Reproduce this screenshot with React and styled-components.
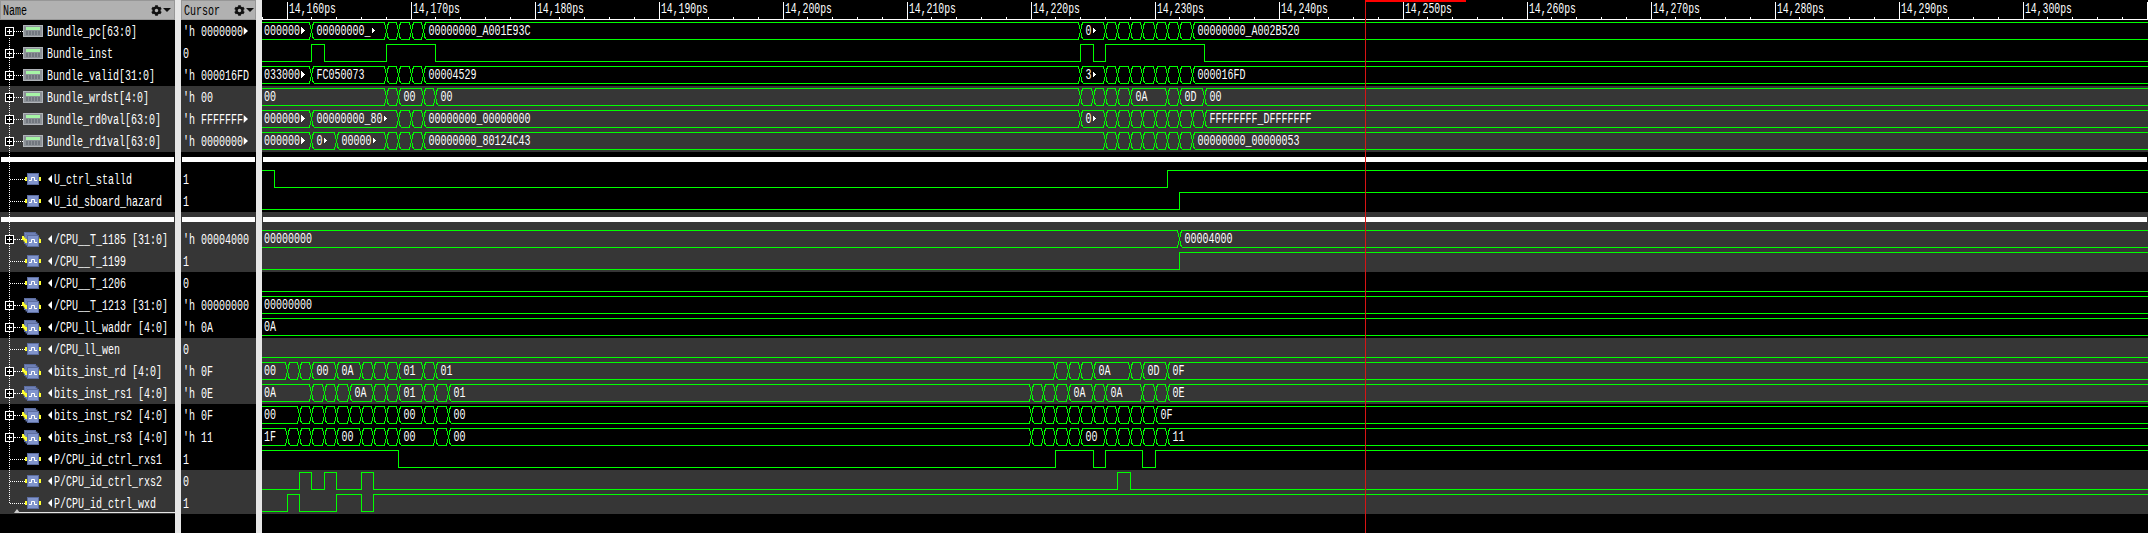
import React from "react";
import styled, { createGlobalStyle } from "styled-components";
import { FaCog } from "react-icons/fa";

const MONO = `"Liberation Mono", "DejaVu Sans Mono", monospace`;
const WAVE_W = 1886;
const HI = 2.5;
const LO = 19.5;

// pixel of a time given in ps after 14,160, inside the wave pane
const px = (n) => Math.floor(287 + 12.4 * n) - 262 + 0.5;

const GlobalStyle = createGlobalStyle`
  html, body {
    margin: 0;
    height: 533px;
    overflow: hidden;
    background: #000;
  }
`;

const Frame = styled.div`
  display: grid;
  grid-template-columns: 175px 75px 1fr;
  column-gap: 6px;
  height: 533px;
  background: #e6e6e6;
  font-family: ${MONO};
  font-size: 14px;
  color: #fff;
`;

const Pane = styled.div`
  position: relative;
  display: flex;
  flex-direction: column;
  min-width: 0;
  background: #000;
  overflow: hidden;
`;

const Header = styled.div`
  box-sizing: border-box;
  height: 20px;
  flex: none;
  display: flex;
  align-items: center;
  justify-content: space-between;
  padding: 0 3px 0 2px;
  background: #b1b1b1;
  border: 1px solid #979797;
  color: #000;
`;

const Tools = styled.div`
  display: flex;
  align-items: center;
  gap: 1px;
  svg {
    width: 11px;
    height: 11px;
    display: block;
  }
`;

const Caret = styled.span`
  width: 0;
  height: 0;
  border-left: 4px solid transparent;
  border-right: 4px solid transparent;
  border-top: 4px solid #111;
`;

const Row = styled.div`
  height: 22px;
  flex: none;
  display: flex;
  align-items: center;
  overflow: hidden;
  white-space: nowrap;
  background: ${(p) => (p.$grey ? "#363636" : "#000")};
  padding-left: ${(p) => p.$pad || 0}px;
`;

const Separator = styled.div`
  box-sizing: border-box;
  height: 16px;
  flex: none;
  padding: 5px 0 6px;
  background: ${(p) => (p.$grey ? "#363636" : "#000")};
  padding-left: ${(p) => p.$left}px;
  padding-right: 1px;
  &::after {
    content: "";
    display: block;
    height: 5px;
    background: #fff;
  }
`;

const Mono = styled.span`
  display: inline-block;
  transform: translateY(1px) scaleX(0.714);
  transform-origin: 0 50%;
  white-space: nowrap;
  line-height: 14px;
`;

const Trunc = styled.span`
  display: inline-block;
  width: 0;
  height: 0;
  margin-left: 1px;
  vertical-align: 1px;
  border-top: 4px solid transparent;
  border-bottom: 4px solid transparent;
  border-left: 6px solid #fff;
`;

const Pointer = styled.span`
  flex: none;
  width: 0;
  height: 0;
  margin: 0 2px 0 7px;
  border-top: 4px solid transparent;
  border-bottom: 4px solid transparent;
  border-right: 4px solid #fff;
`;

const Expander = styled.span`
  position: relative;
  z-index: 2;
  box-sizing: border-box;
  flex: none;
  width: 9px;
  height: 9px;
  border: 1px solid #fff;
  background: #000;
  &::before,
  &::after {
    content: "";
    position: absolute;
    background: #fff;
  }
  &::before {
    left: 1px;
    right: 1px;
    top: 3px;
    height: 1px;
  }
  &::after {
    top: 1px;
    bottom: 1px;
    left: 3px;
    width: 1px;
  }
`;

const Stem = styled.span`
  flex: none;
  width: ${(p) => p.$w}px;
  margin-left: ${(p) => p.$left || 0}px;
  border-top: 1px dotted #fff;
`;

const TreeLine = styled.div`
  position: absolute;
  left: 9px;
  top: 38px;
  height: 465px;
  border-left: 1px dotted #fff;
`;

const Sash = styled.div`
  position: absolute;
  left: 17px;
  right: 0;
  top: 512px;
  height: 1px;
  background: #e6e6e6;
  &::before {
    content: "";
    position: absolute;
    left: -3px;
    top: -3px;
    border-left: 3px solid transparent;
    border-right: 3px solid transparent;
    border-bottom: 4px solid #ccc;
  }
`;

const IconSvg = styled.svg`
  flex: none;
  display: block;
`;

const RulerSvg = styled.svg`
  flex: none;
  display: block;
  shape-rendering: crispEdges;
`;

const WaveSvg = styled.svg`
  display: block;
  flex: none;
  shape-rendering: crispEdges;
`;

const WaveLine = styled.path`
  fill: none;
  stroke: #00ff00;
  stroke-width: 1;
`;

const TickLine = styled.path`
  fill: none;
  stroke: #fff;
  stroke-width: 1;
`;

const SvgText = styled.text`
  fill: #fff;
  font-family: ${MONO};
  font-size: 14px;
`;

const SvgArrow = styled.polygon`
  fill: #fff;
`;

const CursorLine = styled.div`
  position: absolute;
  left: 1103px;
  top: 0;
  bottom: 0;
  width: 1px;
  background: #d81414;
`;

const CursorFlag = styled.div`
  position: absolute;
  left: 1103px;
  top: 0;
  width: 101px;
  height: 2px;
  background: #f00;
`;

const BundleIcon = () => (
  <IconSvg width="20" height="12" viewBox="0 0 20 12">
    <rect x="0.5" y="0.5" width="19" height="11" fill="#8d9298" stroke="#b0b4b9" />
    <rect x="3" y="2" width="14" height="3" fill="#a6f5a6" />
    <path d="M3 7h14M3 9h14" stroke="#565c66" strokeDasharray="2 1" />
  </IconSvg>
);

const Chip = ({ x = 0, y = 0 }) => (
  <g transform={`translate(${x} ${y})`}>
    <rect x="0" y="4" width="16" height="4" fill="#ffff30" />
    <rect x="2.5" y="0.5" width="11" height="11" fill="#8094cc" stroke="#5c6da0" />
    <path d="M4 7.5h2.5v-3h3v3H12" fill="none" stroke="#fff" />
  </g>
);

const WireIcon = () => (
  <IconSvg width="16" height="12" viewBox="0 0 16 12">
    <Chip />
  </IconSvg>
);

const MultiIcon = () => (
  <IconSvg width="19" height="15" viewBox="0 0 19 15">
    <Chip x={0} y={0} />
    <Chip x={1.5} y={1.5} />
    <Chip x={3} y={3} />
  </IconSvg>
);

// flat list: numbers are the edges, a string names the segment in front of it
const bus = (...items) => {
  const edges = [];
  const labels = [];
  items.forEach((it) => {
    if (typeof it === "number") edges.push(it);
    else labels.push({ x: edges.length ? px(edges[edges.length - 1]) + 5 : 2, text: it });
  });
  return { edges, labels };
};

const bit = (start, ...edges) => ({ start, edges });

const wavePath = (edges) => {
  let d = "";
  let from = -1;
  edges.forEach((n) => {
    const x = px(n);
    d += `M${from} ${HI}H${x - 2}M${from} ${LO}H${x - 2}`;
    d += `M${x - 2} ${HI}L${x + 2} ${LO}M${x - 2} ${LO}L${x + 2} ${HI}`;
    from = x + 2;
  });
  return d + `M${from} ${HI}H${WAVE_W}M${from} ${LO}H${WAVE_W}`;
};

const bitPath = ({ start, edges }) => {
  let level = start;
  let d = `M-1 ${level ? HI : LO}`;
  edges.forEach((n) => {
    level = !level;
    d += `H${px(n)}V${level ? HI : LO}`;
  });
  return d + `H${WAVE_W}`;
};

const Wave = ({ wave }) => (
  <WaveSvg width={WAVE_W} height="22" viewBox={`0 0 ${WAVE_W} 22`}>
    <WaveLine d={wave.labels ? wavePath(wave.edges) : bitPath(wave)} />
    {wave.labels &&
      wave.labels.map((l) => {
        const cut = l.text.endsWith(">");
        const text = cut ? l.text.slice(0, -1) : l.text;
        const w = text.length * 6;
        return (
          <React.Fragment key={l.x}>
            <SvgText x={l.x} y="15" textLength={w} lengthAdjust="spacingAndGlyphs">
              {text}
            </SvgText>
            {cut && <SvgArrow points={`${l.x + w + 1},7 ${l.x + w + 5},10.5 ${l.x + w + 1},14`} />}
          </React.Fragment>
        );
      })}
  </WaveSvg>
);

const Ruler = () => {
  const majors = [];
  for (let t = 0; t <= 15; t++) majors.push(t);
  let minor = "";
  for (let n = -2; n < 150; n += 2) {
    if (n % 10 !== 0) minor += `M${px(n)} 17V19`;
  }
  return (
    <RulerSvg width={WAVE_W} height="20" viewBox={`0 0 ${WAVE_W} 20`}>
      <TickLine d={`M0 19.5H${WAVE_W}${minor}`} />
      {majors.map((t) => (
        <React.Fragment key={t}>
          <TickLine d={`M${px(t * 10)} 2V19`} />
          {t < 15 && (
            <SvgText x={px(t * 10) + 1.5} y="13" textLength="47" lengthAdjust="spacingAndGlyphs">
              {`14,${160 + t * 10}ps`}
            </SvgText>
          )}
        </React.Fragment>
      ))}
    </RulerSvg>
  );
};

const BURST = [64, 66, 67, 68, 69, 70, 71, 72, 73];

const ROWS = [
  { name: "Bundle_pc[63:0]", kind: "bundle", value: "'h 0000000>", wave: bus("000000>", 2, "00000000_>", 8, 9, 10, 11, "00000000_A001E93C", 64, "0>", ...BURST.slice(1), "00000000_A002B520") },
  { name: "Bundle_inst", kind: "bundle", value: "0", wave: bit(false, 2, 3, 8, 12, 64, 65, 66, 74) },
  { name: "Bundle_valid[31:0]", kind: "bundle", value: "'h 000016FD", wave: bus("033000>", 2, "FC050073", 8, 9, 10, 11, "00004529", 64, "3>", ...BURST.slice(1), "000016FD") },
  { name: "Bundle_wrdst[4:0]", kind: "bundle", grey: true, value: "'h 00", wave: bus("00", 8, 9, "00", 11, 12, "00", 64, 65, 66, 67, 68, "0A", 71, 72, "0D", 74, "00") },
  { name: "Bundle_rd0val[63:0]", kind: "bundle", grey: true, value: "'h FFFFFFF>", wave: bus("000000>", 2, "00000000_80>", 9, 10, 11, "00000000_00000000", 64, "0>", 66, 67, 68, 69, 70, 71, 72, 73, 74, "FFFFFFFF_DFFFFFFF") },
  { name: "Bundle_rd1val[63:0]", kind: "bundle", grey: true, value: "'h 0000000>", wave: bus("000000>", 2, "0>", 4, "00000>", 8, 9, 10, 11, "00000000_80124C43", 66, 67, 68, 69, 70, 71, 72, 73, "00000000_00000053") },
  { sep: true },
  { name: "U_ctrl_stalld", kind: "wire", value: "1", wave: bit(true, -1, 71) },
  { name: "U_id_sboard_hazard", kind: "wire", value: "1", wave: bit(false, 72) },
  { sep: true, grey: true },
  { name: "/CPU__T_1185 [31:0]", kind: "multi", grey: true, value: "'h 00004000", wave: bus("00000000", 72, "00004000") },
  { name: "/CPU__T_1199", kind: "wire", grey: true, value: "1", wave: bit(false, 72) },
  { name: "/CPU__T_1206", kind: "wire", value: "0", wave: bit(false) },
  { name: "/CPU__T_1213 [31:0]", kind: "multi", value: "'h 00000000", wave: bus("00000000") },
  { name: "/CPU_ll_waddr [4:0]", kind: "multi", value: "'h 0A", wave: bus("0A") },
  { name: "/CPU_ll_wen", kind: "wire", grey: true, value: "0", wave: bit(false) },
  { name: "bits_inst_rd [4:0]", kind: "multi", grey: true, value: "'h 0F", wave: bus("00", 0, 1, 2, "00", 4, "0A", 6, 7, 8, 9, "01", 11, 12, "01", 62, 63, 64, 65, "0A", 68, 69, "0D", 71, "0F") },
  { name: "bits_inst_rs1 [4:0]", kind: "multi", grey: true, value: "'h 0E", wave: bus("0A", 2, 3, 4, 5, "0A", 7, 8, 9, "01", 11, 12, 13, "01", 60, 61, 62, 63, "0A", 65, 66, "0A", 69, 70, 71, "0E") },
  { name: "bits_inst_rs2 [4:0]", kind: "multi", value: "'h 0F", wave: bus("00", 1, 2, 3, 4, 5, 6, 7, 8, 9, "00", 11, 12, 13, "00", 60, 61, 62, 63, 64, 65, 66, 67, 68, 69, 70, "0F") },
  { name: "bits_inst_rs3 [4:0]", kind: "multi", value: "'h 11", wave: bus("1F", 0, 1, 2, 3, 4, "00", 6, 7, 8, 9, "00", 12, 13, "00", 60, 61, 62, 63, 64, "00", 66, 67, 68, 69, 70, 71, "11") },
  { name: "P/CPU_id_ctrl_rxs1", kind: "wire", value: "1", wave: bit(true, 9, 62, 65, 66, 69, 70) },
  { name: "P/CPU_id_ctrl_rxs2", kind: "wire", grey: true, value: "0", wave: bit(false, 1, 2, 3, 4, 6, 7, 67, 68) },
  { name: "P/CPU_id_ctrl_wxd", kind: "wire", grey: true, value: "1", wave: bit(false, 0, 1, 4, 6, 7) },
];

const Text = ({ value }) => {
  const cut = value.endsWith(">");
  return (
    <Mono>
      {cut ? value.slice(0, -1) : value}
      {cut && <Trunc />}
    </Mono>
  );
};

const NameCell = ({ row }) => {
  if (row.kind === "bundle") {
    return (
      <Row $grey={row.grey} $pad={5}>
        <Expander />
        <Stem $w={9} />
        <BundleIcon />
        <Stem $w={0} $left={4} />
        <Text value={row.name} />
      </Row>
    );
  }
  if (row.kind === "multi") {
    return (
      <Row $grey={row.grey} $pad={5}>
        <Expander />
        <Stem $w={8} />
        <MultiIcon />
        <Pointer />
        <Text value={row.name} />
      </Row>
    );
  }
  return (
    <Row $grey={row.grey} $pad={10}>
      <Stem $w={15} />
      <WireIcon />
      <Pointer />
      <Text value={row.name} />
    </Row>
  );
};

const ColumnHeader = ({ title }) => (
  <Header>
    <Mono>{title}</Mono>
    <Tools>
      <FaCog color="#111" />
      <Caret />
    </Tools>
  </Header>
);

export default function App() {
  return (
    <>
      <GlobalStyle />
      <Frame>
        <Pane>
          <ColumnHeader title="Name" />
          {ROWS.map((r, i) =>
            r.sep ? <Separator key={i} $grey={r.grey} $left={1} /> : <NameCell key={i} row={r} />
          )}
          <TreeLine />
          <Sash />
        </Pane>
        <Pane>
          <ColumnHeader title="Cursor" />
          {ROWS.map((r, i) =>
            r.sep ? (
              <Separator key={i} $grey={r.grey} $left={1} />
            ) : (
              <Row key={i} $grey={r.grey} $pad={2}>
                <Text value={r.value} />
              </Row>
            )
          )}
        </Pane>
        <Pane>
          <Ruler />
          {ROWS.map((r, i) =>
            r.sep ? (
              <Separator key={i} $grey={r.grey} $left={1} />
            ) : (
              <Row key={i} $grey={r.grey}>
                <Wave wave={r.wave} />
              </Row>
            )
          )}
          <CursorLine />
          <CursorFlag />
        </Pane>
      </Frame>
    </>
  );
}
